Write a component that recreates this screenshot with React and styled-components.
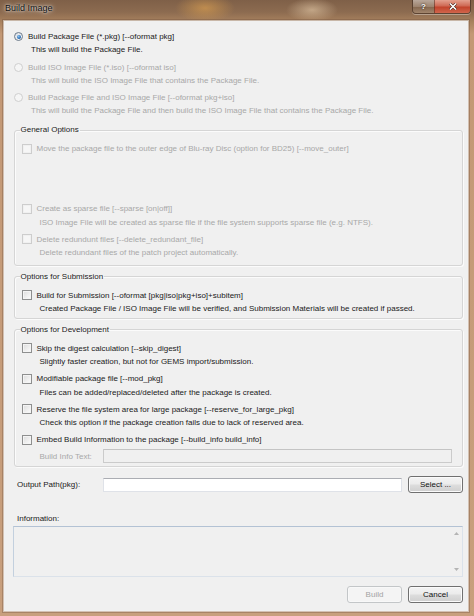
import React from 'react'
import styled, { createGlobalStyle } from 'styled-components'

const GlobalStyle = createGlobalStyle`
  html, body { margin: 0; padding: 0; background: #c49a78; }
  body { font-family: "Liberation Sans", Arial, sans-serif; font-size: 8px; }
  * { box-sizing: border-box; }
`

const Window = styled.div`
  width: 474px;
  height: 616px;
  display: flex;
  flex-direction: column;
  overflow: hidden;
  background:
    radial-gradient(ellipse 30px 14px at 205px 8px, rgba(235, 170, 80, 0.55), transparent),
    radial-gradient(ellipse 26px 12px at 312px 10px, rgba(240, 215, 180, 0.55), transparent),
    linear-gradient(180deg, #7f6048 0px, #8c6b50 12px, #a9825f 22px, #c39875 34px, #c89f7d 100%);
`

const TitleBar = styled.div`
  flex: none;
  height: 21px;
  display: flex;
  align-items: flex-start;
`

const Title = styled.div`
  padding-left: 5px;
  line-height: 17px;
  font-size: 9px;
  color: #111;
  text-shadow: 0 0 5px rgba(255, 255, 255, 0.9), 0 0 2px rgba(255, 255, 255, 0.7);
`

const Captions = styled.div`
  margin-left: auto;
  margin-right: 3px;
  display: flex;
  border: 1px solid rgba(60, 40, 30, 0.6);
  border-top: none;
  border-radius: 0 0 4px 4px;
  overflow: hidden;
  box-shadow: 0 1px 0 rgba(255, 255, 255, 0.35);
`

const CaptionButton = styled.div`
  width: ${p => p.$w}px;
  height: 13px;
  display: flex;
  align-items: center;
  justify-content: center;
  color: #fff;
  font-weight: bold;
  font-size: 8px;
  text-shadow: 0 0 2px #000;
  background: ${p => p.$close
    ? 'linear-gradient(180deg, #e3a08e 0%, #cf6a55 45%, #c2442c 55%, #d1664c 100%)'
    : 'linear-gradient(180deg, rgba(255,255,255,0.45) 0%, rgba(255,255,255,0.2) 50%, rgba(120,100,80,0.25) 51%, rgba(200,180,160,0.35) 100%)'};
  & + & { border-left: 1px solid rgba(60, 40, 30, 0.5); }
`

const Client = styled.div`
  height: 590px;
  margin: 0 6px 5px 4px;
  background: #f0f0f0;
  box-shadow: 0 0 0 1px rgba(255, 255, 255, 0.5), 0 0 0 2px rgba(110, 80, 60, 0.35);
  padding: 9px 5px 0 9px;
  display: flex;
  flex-direction: column;
`

const RadioList = styled.div`
  display: flex;
  flex-direction: column;
  gap: 4.5px;
  padding-left: 1px;
`

const Option = styled.div`
  color: ${p => (p.$disabled ? '#a8a8a8' : '#1a1a1a')};
`

const OptionMain = styled.div`
  display: flex;
  align-items: center;
  gap: 5px;
  height: ${p => p.$h}px;
  white-space: nowrap;
`

const OptionSub = styled.div`
  line-height: ${p => p.$h}px;
  padding-left: ${p => p.$indent}px;
  white-space: nowrap;
`

const RadioMark = styled.span`
  flex: none;
  position: relative;
  width: 9px;
  height: 9px;
  border-radius: 50%;
  border: 1px solid ${p => (p.$disabled ? '#cfcfcf' : '#6c7a8a')};
  background: ${p => (p.$disabled ? '#f5f5f5' : 'linear-gradient(135deg, #d9dee4, #fbfbfb)')};
  &::after {
    content: '';
    display: ${p => (p.$checked ? 'block' : 'none')};
    position: absolute;
    left: 1.5px;
    top: 1.5px;
    width: 4px;
    height: 4px;
    border-radius: 50%;
    background: radial-gradient(circle at 40% 35%, #8cc4f2, #2a6db5 60%, #173e70);
  }
`

const CheckMark = styled.span`
  flex: none;
  width: 10px;
  height: 10px;
  border: 1px solid ${p => (p.$disabled ? '#cdcdcd' : '#8e8f8f')};
  background: ${p => (p.$disabled ? '#f6f6f6' : 'linear-gradient(135deg, #dcdcdc, #fdfdfd)')};
  box-shadow: inset 0 0 0 1px ${p => (p.$disabled ? '#f0f0f0' : '#f4f4f4')};
`

const GroupBox = styled.fieldset`
  margin: ${p => p.$mt}px 0 0 0.5px;
  padding: 5.5px 8px ${p => p.$pb}px 7px;
  border: 1px solid #d5d5d5;
  border-radius: 3px;
  box-shadow: inset 1px 1px 0 #fbfbfb, 1px 1px 0 #fbfbfb;
  min-width: 0;
`

const Legend = styled.legend`
  font-size: 8px;
  line-height: 12px;
  padding: 0 1px;
  margin-left: -2px;
  color: #1a1a1a;
`

const CheckList = styled.div`
  display: flex;
  flex-direction: column;
  gap: 2.5px;
`

const Spacer = styled.div`
  height: ${p => p.$h}px;
`

const FieldRow = styled.div`
  display: flex;
  align-items: center;
  height: ${p => p.$h}px;
  margin-top: ${p => p.$mt}px;
  padding-left: ${p => p.$pl}px;
`

const FieldLabel = styled.div`
  flex: none;
  width: ${p => p.$w}px;
  color: ${p => (p.$disabled ? '#a8a8a8' : '#1a1a1a')};
  white-space: nowrap;
`

const TextInput = styled.div`
  flex: 1;
  height: 14px;
  margin-right: ${p => p.$mr || 0}px;
  background: ${p => (p.$disabled ? '#f0f0f0' : '#ffffff')};
  border: 1px solid ${p => (p.$disabled ? '#cbcbcb' : '#dfe2e8')};
  border-top-color: ${p => (p.$disabled ? '#c4c4c4' : '#abadb3')};
`

const Button = styled.div`
  flex: none;
  width: 55px;
  height: 17px;
  display: flex;
  align-items: center;
  justify-content: center;
  border-radius: 3px;
  color: ${p => (p.$disabled ? '#a3a3a3' : '#111')};
  border: 1px solid ${p => (p.$disabled ? '#c3c6c8' : '#707070')};
  background: ${p => (p.$disabled
    ? '#f4f4f4'
    : 'linear-gradient(180deg, #f4f4f4 0%, #ebebeb 48%, #dddddd 52%, #cfcfcf 100%)')};
  box-shadow: inset 0 0 0 1px ${p => (p.$disabled ? '#f8f8f8' : '#fbfbfb')};
  margin-left: ${p => p.$ml || 0}px;
`

const InfoLabel = styled.div`
  margin-top: 20px;
  padding-left: 4px;
  line-height: 12px;
  color: #1a1a1a;
`

const InfoBox = styled.div`
  margin-top: 1px;
  height: 51px;
  display: flex;
  background: #f0f0f0;
  border: 1px solid #dbe2ea;
  border-top-color: #b3c2d4;
  border-left-color: #c3d0de;
`

const InfoText = styled.div`
  flex: 1;
`

const ScrollBar = styled.div`
  flex: none;
  width: 12px;
  display: flex;
  flex-direction: column;
  justify-content: space-between;
  align-items: center;
  padding: 5px 0 5px;
`

const Footer = styled.div`
  margin-top: 9px;
  display: flex;
  justify-content: flex-end;
`

const Arrow = ({ down }) => (
  <svg width="5" height="3" viewBox="0 0 5 3">
    <path d={down ? 'M0 0 L5 0 L2.5 3 Z' : 'M0 3 L5 3 L2.5 0 Z'} fill="#b4b4b4" />
  </svg>
)

const Radio = ({ checked, disabled, label, sub }) => (
  <Option $disabled={disabled}>
    <OptionMain $h={13}>
      <RadioMark $checked={checked} $disabled={disabled} />
      <span>{label}</span>
    </OptionMain>
    <OptionSub $h={13} $indent={17}>{sub}</OptionSub>
  </Option>
)

const Check = ({ disabled, label, sub }) => (
  <Option $disabled={disabled}>
    <OptionMain $h={14}>
      <CheckMark $disabled={disabled} />
      <span>{label}</span>
    </OptionMain>
    {sub && <OptionSub $h={14} $indent={18}>{sub}</OptionSub>}
  </Option>
)

const App = () => (
  <>
    <GlobalStyle />
    <Window>
      <TitleBar>
        <Title>Build Image</Title>
        <Captions>
          <CaptionButton $w={21}>?</CaptionButton>
          <CaptionButton $w={36} $close>
            <svg width="8" height="7" viewBox="0 0 8 7">
              <path d="M1 0.5 L7 6.5 M7 0.5 L1 6.5" stroke="#3a1a12" strokeWidth="2.6" />
              <path d="M1 0.5 L7 6.5 M7 0.5 L1 6.5" stroke="#fff" strokeWidth="1.6" />
            </svg>
          </CaptionButton>
        </Captions>
      </TitleBar>

      <Client>
        <RadioList>
          <Radio checked label="Build Package File (*.pkg)  [--oformat pkg]" sub="This will build the Package File." />
          <Radio disabled label="Build ISO Image File (*.iso)  [--oformat iso]" sub="This will build the ISO Image File that contains the Package File." />
          <Radio disabled label="Build Package File and ISO Image File [--oformat pkg+iso]" sub="This will build the Package File and then build the ISO Image File that contains the Package File." />
        </RadioList>

        <GroupBox $mt={7} $pb={5}>
          <Legend>General Options</Legend>
          <CheckList>
            <Check disabled label="Move the package file to the outer edge of Blu-ray Disc (option for BD25) [--move_outer]" />
            <Spacer $h={41} />
            <Check disabled label="Create as sparse file [--sparse [on|off]]" sub="ISO Image File will be created as sparse file if the file system supports sparse file (e.g. NTFS)." />
            <Check disabled label="Delete redundunt files [--delete_redundant_file]" sub="Delete redundant files of the patch project automatically." />
          </CheckList>
        </GroupBox>

        <GroupBox $mt={4.5} $pb={2}>
          <Legend>Options for Submission</Legend>
          <CheckList>
            <Check label="Build for Submission [--oformat [pkg|iso|pkg+iso]+subitem]" sub="Created Package File / ISO Image File will be verified, and Submission Materials will be created if passed." />
          </CheckList>
        </GroupBox>

        <GroupBox $mt={4.5} $pb={3}>
          <Legend>Options for Development</Legend>
          <CheckList>
            <Check label="Skip the digest calculation [--skip_digest]" sub="Slightly faster creation, but not for GEMS import/submission." />
            <Check label="Modifiable package file [--mod_pkg]" sub="Files can be added/replaced/deleted after the package is created." />
            <Check label="Reserve the file system area for large package [--reserve_for_large_pkg]" sub="Check this option if the package creation fails due to lack of reserved area." />
            <Check label="Embed Build Information to the package [--build_info build_info]" />
            <FieldRow $h={14} $mt={0} $pl={18}>
              <FieldLabel $w={63} $disabled>Build Info Text:</FieldLabel>
              <TextInput $disabled $mr={2} />
            </FieldRow>
          </CheckList>
        </GroupBox>

        <FieldRow $h={17} $mt={9} $pl={4}>
          <FieldLabel $w={86}>Output Path(pkg):</FieldLabel>
          <TextInput />
          <Button $ml={6}>Select ...</Button>
        </FieldRow>

        <InfoLabel>Information:</InfoLabel>
        <InfoBox>
          <InfoText />
          <ScrollBar>
            <Arrow />
            <Arrow down />
          </ScrollBar>
        </InfoBox>

        <Footer>
          <Button $disabled>Build</Button>
          <Button $ml={6}>Cancel</Button>
        </Footer>
      </Client>
    </Window>
  </>
)

export default App
